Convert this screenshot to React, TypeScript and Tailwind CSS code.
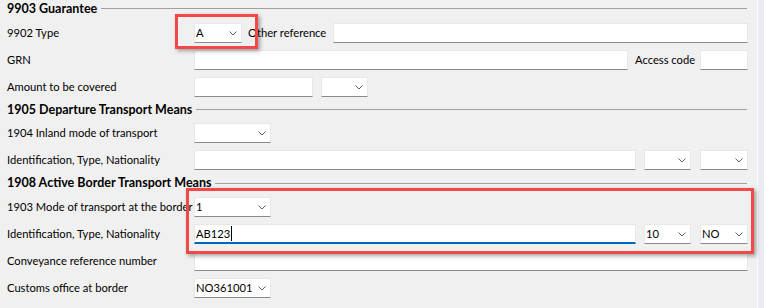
import React from "react";

const Chevron = () => (
  <svg width="8" height="5" viewBox="0 0 8 5" className="shrink-0">
    <path d="M0.5 0.5 L4 4 L7.5 0.5" fill="none" stroke="#606060" strokeWidth="1" />
  </svg>
);

const Combo = ({ value = "", className = "" }: { value?: string; className?: string }) => (
  <div
    className={`h-[20px] bg-white border border-[#e8e8e8] border-b-[#8a8a8a] flex items-center justify-between pl-[1px] pr-[4px] text-[#000] ${className}`}
  >
    <span className="leading-[18px]">{value}</span>
    <Chevron />
  </div>
);

const Input = ({ value = "", className = "", focused = false }: { value?: string; className?: string; focused?: boolean }) => (
  <div
    className={`h-[20px] bg-white border border-[#e8e8e8] flex items-center pl-[1px] ${
      focused ? "border-b-2 border-b-[#0067c0]" : "border-b-[#8a8a8a]"
    } ${className}`}
  >
    <span className="leading-[18px]">{value}</span>
    {focused && <span className="w-px h-[15px] bg-black ml-[1px]" />}
  </div>
);

const Header = ({ text, className = "" }: { text: string; className?: string }) => (
  <div className={`flex items-center ${className}`}>
    <span className="font-bold text-[12.5px] leading-[16px]">{text}</span>
    <div className="flex-1 h-px bg-[#a0a0a0] ml-[4px] mr-[1px]" />
  </div>
);

const Row = ({ label, children }: { label: string; children: React.ReactNode }) => (
  <div className="flex items-start h-[27px] pt-[4px]">
    <div className="w-[187px] shrink-0 leading-[20px] whitespace-nowrap">{label}</div>
    {children}
  </div>
);

export default function App() {
  return (
    <div
      className="relative w-[764px] h-[308px] overflow-hidden bg-[#f0f0f0] text-[11.2px] text-black flex"
      style={{ fontFamily: 'Lato, "Open Sans", sans-serif' }}
    >
      <div className="w-[757px] shrink-0 pl-[7px] pr-[9px]">
        <Header text="9903 Guarantee" className="h-[17px]" />
        <div className="h-[2px]" />
        <Row label="9902 Type">
          <Combo value="A" className="w-[48px]" />
          <div className="ml-[6px] w-[85px] leading-[20px] whitespace-nowrap">Other reference</div>
          <Input className="flex-1" />
        </Row>
        <Row label="GRN">
          <Input className="w-[434px]" />
          <div className="ml-[7px] w-[65px] leading-[20px] whitespace-nowrap">Access code</div>
          <Input className="flex-1" />
        </Row>
        <Row label="Amount to be covered">
          <Input className="w-[119px]" />
          <Combo className="ml-[8px] w-[47px]" />
        </Row>
        <Header text="1905 Departure Transport Means" className="h-[19px]" />
        <Row label="1904 Inland mode of transport">
          <Combo className="w-[77px]" />
        </Row>
        <Row label="Identification, Type, Nationality">
          <Input className="w-[442px]" />
          <Combo className="ml-[8px] w-[47px]" />
          <Combo className="ml-[9px] flex-1" />
        </Row>
        <Header text="1908 Active Border Transport Means" className="h-[20px]" />
        <Row label="1903 Mode of transport at the border">
          <Combo value="1" className="w-[77px]" />
        </Row>
        <Row label="Identification, Type, Nationality">
          <Input value="AB123" focused className="w-[442px]" />
          <Combo value="10" className="ml-[8px] w-[47px]" />
          <Combo value="NO" className="ml-[9px] flex-1" />
        </Row>
        <Row label="Conveyance reference number">
          <Input className="flex-1" />
        </Row>
        <Row label="Customs office at border">
          <Combo value="NO361001" className="w-[77px]" />
        </Row>
      </div>
      <div className="flex-1 border-l border-[#fafafa] bg-[#e9edf2]" />

      <div className="absolute left-[175px] top-[14px] w-[83px] h-[35px] border-[3px] border-[#f24848] shadow-[2px_2px_4px_rgba(0,0,0,0.35)]" />
      <div className="absolute left-[186px] top-[188px] w-[568px] h-[66px] border-[3px] border-[#f24848] shadow-[2px_2px_4px_rgba(0,0,0,0.35)]" />
    </div>
  );
}
